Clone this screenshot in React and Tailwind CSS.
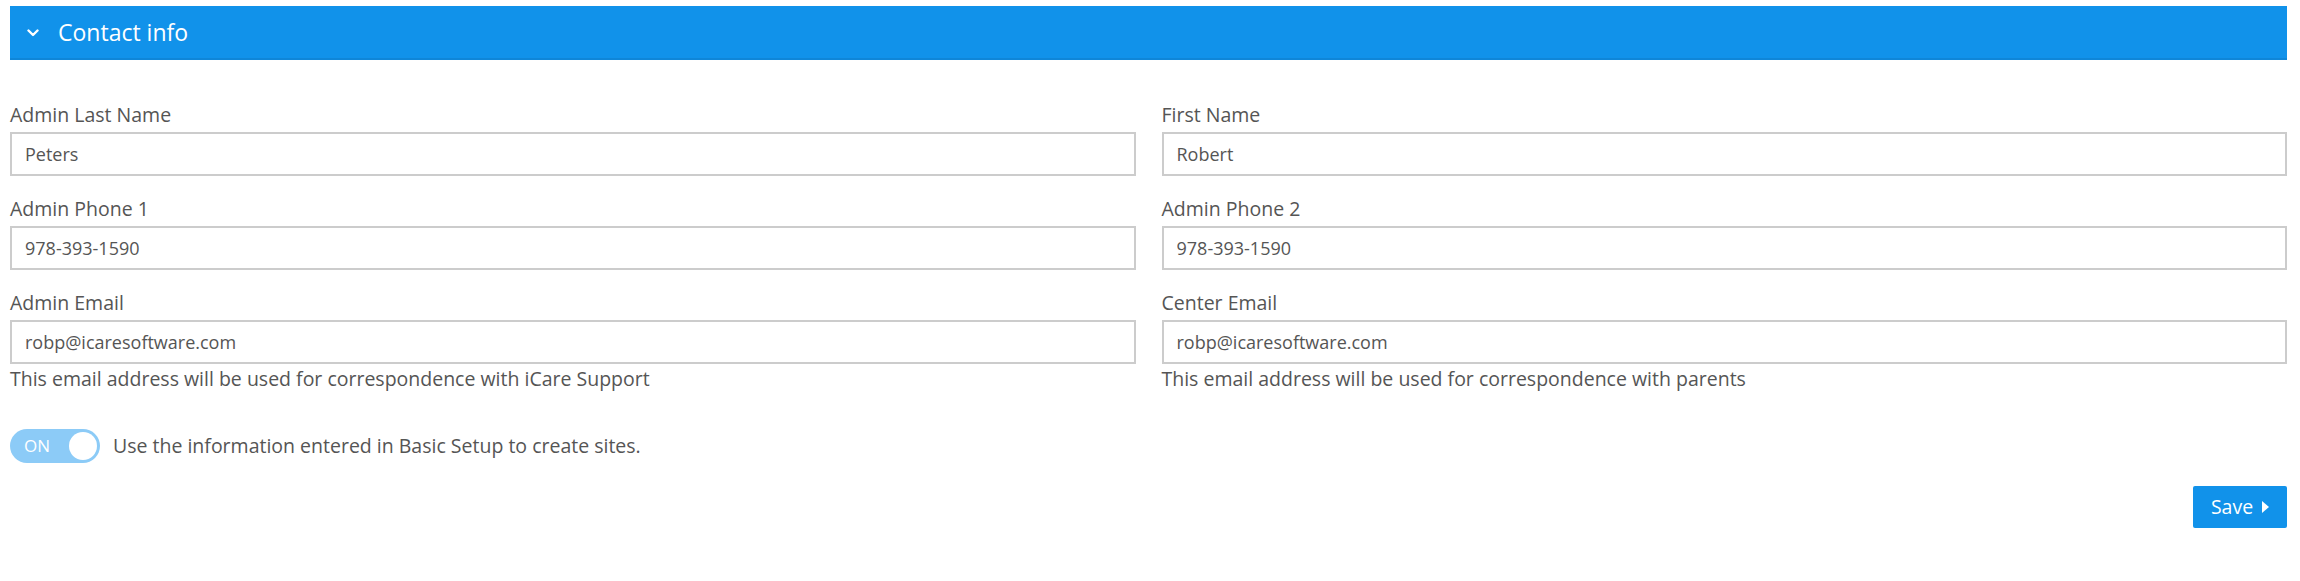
import { useState } from 'react';

const fields = [
  [
    { label: 'Admin Last Name', value: 'Peters' },
    { label: 'First Name', value: 'Robert' },
  ],
  [
    { label: 'Admin Phone 1', value: '978-393-1590' },
    { label: 'Admin Phone 2', value: '978-393-1590' },
  ],
  [
    {
      label: 'Admin Email',
      value: 'robp@icaresoftware.com',
      help: 'This email address will be used for correspondence with iCare Support',
    },
    {
      label: 'Center Email',
      value: 'robp@icaresoftware.com',
      help: 'This email address will be used for correspondence with parents',
    },
  ],
];

function Field({ label, value, help }) {
  const [val, setVal] = useState(value);
  return (
    <div className="flex flex-col">
      <label className="text-[19.5px] leading-[26px] text-[#555]">{label}</label>
      <input
        value={val}
        onChange={(e) => setVal(e.target.value)}
        className="mt-[4px] h-[44px] w-full border-2 border-[#cccccc] bg-white px-[13px] text-[18px] text-[#555] outline-none"
      />
      {help && <div className="mt-[2px] text-[19.5px] leading-[26px] text-[#555]">{help}</div>}
    </div>
  );
}

export default function App() {
  const [on, setOn] = useState(true);

  return (
    <div className="min-h-screen bg-white pt-[6px] pl-[10px] pr-[13px]" style={{ fontFamily: '"Open Sans", sans-serif' }}>
      {/* Section header */}
      <div className="flex h-[54px] items-center border-b-2 border-[#0f86d8] bg-[#1192ea] pl-[17px] text-white">
        <svg width="12" height="8" viewBox="0 0 12 8" className="mt-[1px]">
          <polyline points="1.5,1.5 6,6 10.5,1.5" fill="none" stroke="white" strokeWidth="2.4" strokeLinecap="round" strokeLinejoin="round" />
        </svg>
        <span className="ml-[19px] text-[23px] leading-none">Contact info</span>
      </div>

      {/* Form rows */}
      <div className="mt-[42px] flex flex-col gap-[20px]">
        {fields.map((row, i) => (
          <div key={i} className="grid grid-cols-2 gap-x-[26px]">
            {row.map((f) => (
              <Field key={f.label} {...f} />
            ))}
          </div>
        ))}
      </div>

      {/* Toggle */}
      <div className="mt-[37px] flex items-center">
        <button
          onClick={() => setOn(!on)}
          className="flex h-[34px] w-[90px] items-center justify-between rounded-full bg-[#8ccbf7] pl-[14px] pr-[3px]"
        >
          <span className="text-[17px] text-white">{on ? 'ON' : 'OFF'}</span>
          <span className="h-[28px] w-[28px] rounded-full bg-white" />
        </button>
        <span className="ml-[13px] text-[19.5px] text-[#555]">Use the information entered in Basic Setup to create sites.</span>
      </div>

      {/* Save */}
      <div className="mt-[23px] flex justify-end">
        <button className="flex h-[42px] w-[94px] items-center justify-center gap-[9px] rounded-[2px] bg-[#1192ea] text-[19.5px] text-white">
          Save
          <svg width="7" height="12" viewBox="0 0 7 12">
            <polygon points="0,0 7,6 0,12" fill="white" />
          </svg>
        </button>
      </div>
    </div>
  );
}
